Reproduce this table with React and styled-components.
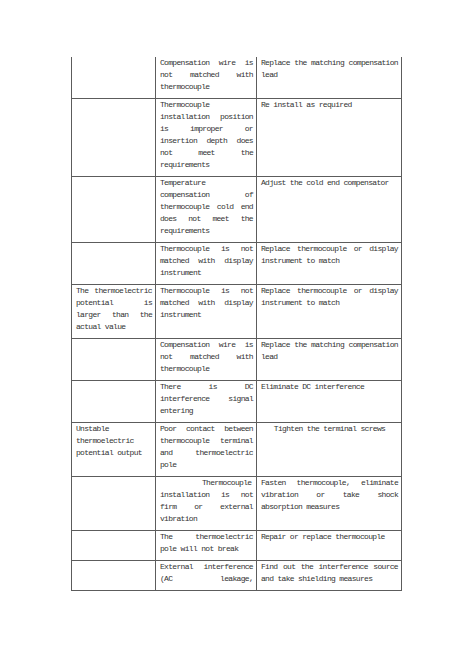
import React from "react";
import styled, { createGlobalStyle } from "styled-components";

const GlobalStyle = createGlobalStyle`
  html, body {
    margin: 0;
    padding: 0;
    background: #ffffff;
  }
`;

const rows = [
  { cause: "", reason: "Compensation wire is not matched with thermocouple", fix: "Replace the matching compensation lead" },
  { cause: "", reason: "Thermocouple installation position is improper or insertion depth does not meet the requirements", fix: "Re install as required" },
  { cause: "", reason: "Temperature compensation of thermocouple cold end does not meet the requirements", fix: "Adjust the cold end compensator" },
  { cause: "", reason: "Thermocouple is not matched with display instrument", fix: "Replace thermocouple or display instrument to match" },
  { cause: "The thermoelectric potential is larger than the actual value", reason: "Thermocouple is not matched with display instrument", fix: "Replace thermocouple or display instrument to match" },
  { cause: "", reason: "Compensation wire is not matched with thermocouple", fix: "Replace the matching compensation lead" },
  { cause: "", reason: "There is DC interference signal entering", fix: "Eliminate DC interference" },
  { cause: "Unstable thermoelectric potential output", reason: "Poor contact between thermocouple terminal and thermoelectric pole", fix: "Tighten the terminal screws", centerFix: true },
  { cause: "", reason: "Thermocouple installation is not firm or external vibration", fix: "Fasten thermocouple, eliminate vibration or take shock absorption measures", indentReason: true },
  { cause: "", reason: "The thermoelectric pole will not break", fix: "Repair or replace thermocouple" },
  { cause: "", reason: "External interference (AC leakage,", fix: "Find out the interference source and take shielding measures", cut: true },
];

const App = () => {
  return (
    <Page>
      <GlobalStyle />
      <Table>
        <colgroup>
          <col style={{ width: 84 }} />
          <col style={{ width: 101 }} />
          <col style={{ width: 145 }} />
        </colgroup>
        <tbody>
          {rows.map((row, i) => (
            <Row key={i} $first={i === 0}>
              <Cell>{row.cause}</Cell>
              <Cell $indent={row.indentReason} $cut={row.cut}>
                {row.reason}
              </Cell>
              <Cell $center={row.centerFix}>{row.fix}</Cell>
            </Row>
          ))}
        </tbody>
      </Table>
    </Page>
  );
};

export default App;

const Page = styled.div`
  width: 474px;
  height: 670px;
  box-sizing: border-box;
  padding: 57px 0 0 71px;
  background: #ffffff;
  overflow: hidden;
`;

const Table = styled.table`
  width: 331px;
  table-layout: fixed;
  border-collapse: collapse;
  font-family: "Liberation Mono", "Noto Sans CJK SC", monospace;
  font-size: 8px;
  letter-spacing: -0.68px;
  line-height: 12px;
  color: #333333;
`;

const Row = styled.tr`
  td {
    border-top: ${(p) => (p.$first ? "none" : "1.5px solid #5c5c5c")};
  }
`;

const Cell = styled.td`
  border: 1.5px solid #5c5c5c;
  padding: 0 3px 5px 4px;
  vertical-align: top;
  text-align: ${(p) => (p.$center ? "center" : "justify")};
  text-indent: ${(p) => (p.$indent ? "42px" : "0")};
  ${(p) => p.$cut && `text-align-last: justify;`}
`;
